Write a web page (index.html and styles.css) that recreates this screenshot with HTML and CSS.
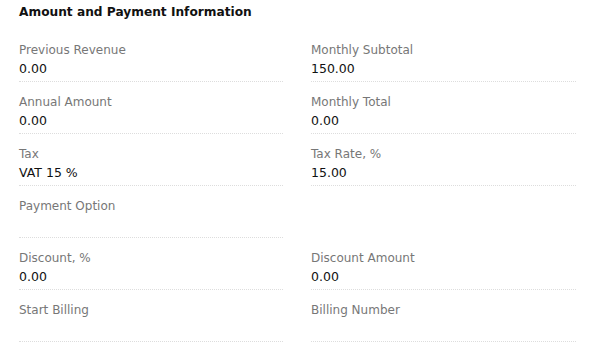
FILE: index.html
```html
<!DOCTYPE html>
<html lang="en">
<head>
    <meta charset="UTF-8">
    <title>Amount and Payment Information</title>
    <meta name="viewport" content="width=device-width, initial-scale=1.0">
    <link rel="stylesheet" href="styles.css">
</head>
<body>
    <section class="panel">
        <h2 class="panel-title">Amount and Payment Information</h2>
        <div class="fields">
            <div class="field">
                <div class="field-label">Previous Revenue</div>
                <div class="field-value">0.00</div>
            </div>
            <div class="field">
                <div class="field-label">Monthly Subtotal</div>
                <div class="field-value">150.00</div>
            </div>
            <div class="field">
                <div class="field-label">Annual Amount</div>
                <div class="field-value">0.00</div>
            </div>
            <div class="field">
                <div class="field-label">Monthly Total</div>
                <div class="field-value">0.00</div>
            </div>
            <div class="field">
                <div class="field-label">Tax</div>
                <div class="field-value">VAT 15 %</div>
            </div>
            <div class="field">
                <div class="field-label">Tax Rate, %</div>
                <div class="field-value">15.00</div>
            </div>
            <div class="field">
                <div class="field-label">Payment Option</div>
                <div class="field-value"></div>
            </div>
            <div class="field empty"></div>
            <div class="field">
                <div class="field-label">Discount, %</div>
                <div class="field-value">0.00</div>
            </div>
            <div class="field">
                <div class="field-label">Discount Amount</div>
                <div class="field-value">0.00</div>
            </div>
            <div class="field">
                <div class="field-label">Start Billing</div>
                <div class="field-value"></div>
            </div>
            <div class="field">
                <div class="field-label">Billing Number</div>
                <div class="field-value"></div>
            </div>
        </div>
    </section>
</body>
</html>
```

FILE: styles.css
```css
body { margin: 0; background: #fff; font-family: "DejaVu Sans", sans-serif; color: #111; }
.panel { padding: 3px 20px 0 19px; }
.panel-title { margin: 0 0 18px; font-size: 12.2px; line-height: 19px; font-weight: bold; color: #111; }
.fields { display: grid; grid-template-columns: 264px 265px; column-gap: 28px; row-gap: 10px; }
.field { border-bottom: 1px dotted #ddd; padding-bottom: 3px; }
.field.empty { border-bottom: none; }
.field-label { font-size: 12px; line-height: 19px; padding-top: 1px; margin-bottom: -1px; color: #777; }
.field-value { font-size: 12.5px; line-height: 19px; min-height: 19px; color: #111; }
```
